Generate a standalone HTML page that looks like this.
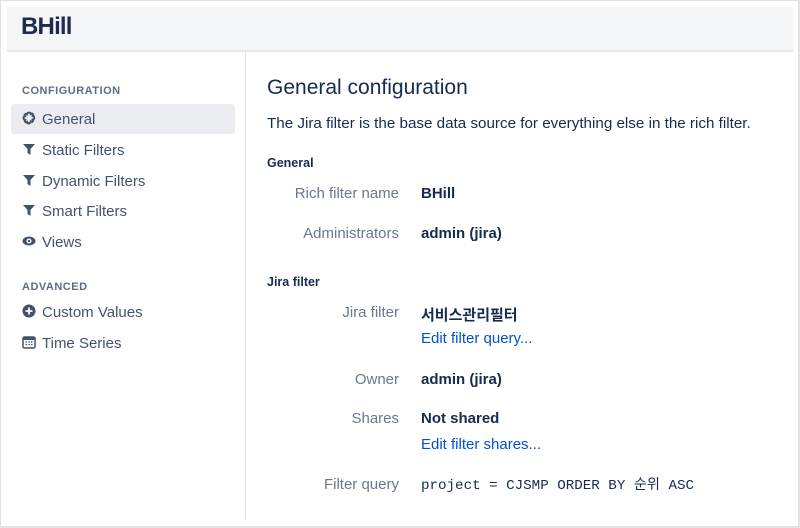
<!DOCTYPE html>
<html><head><meta charset="utf-8"><style>
*{margin:0;padding:0;box-sizing:border-box}
body{width:800px;height:528px;background:#fff;font-family:"Liberation Sans","Noto Sans CJK KR",sans-serif;color:#172b4d;position:relative;overflow:hidden}
.frame{position:absolute;left:0;top:0;width:800px;height:528px;border:1px solid #e2e2e2;border-bottom-width:2px;border-right-width:2px}
.hdr{position:absolute;left:7px;top:7px;width:786px;height:45px;background:#f4f5f7;border-bottom:2px solid #e4e6ea}
.hdr h1{position:absolute;left:14px;top:6px;font-size:24px;font-weight:bold;color:#1d2b4f;letter-spacing:-0.8px}
.div{position:absolute;left:245px;top:52px;width:1px;height:468px;background:#dfe1e6}
.sec{position:absolute;left:22px;font-size:11px;font-weight:bold;color:#5e6c84;letter-spacing:0.5px}
.item{position:absolute;left:11px;width:224px;height:30px;font-size:15px;color:#42526e;line-height:30px;padding-left:31px}
.item span{position:relative;top:1px}
.item.sel{background:#ebecf0;border-radius:3px}
.item svg{position:absolute;left:11px;top:7px}
.t{position:absolute;white-space:nowrap}
.lab{position:absolute;right:401px;font-size:15px;color:#6b778c;white-space:nowrap}
.val{position:absolute;left:421px;font-size:15px;font-weight:bold;color:#172b4d;white-space:nowrap}
.lnk{position:absolute;left:421px;font-size:15px;color:#0052cc;white-space:nowrap}
</style></head><body>
<div class="frame"></div>
<div class="hdr"><h1>BHill</h1></div>
<div class="div"></div>
<div class="sec" style="top:85px">CONFIGURATION</div>
<div class="item sel" style="top:104px"><svg width="14" height="14" viewBox="0 0 14 14"><path d="M7 1.5l1.3.3.5 1.3 1.3-.5 1 1-.5 1.3 1.3.5.3 1.3-.3 1.3-1.3.5.5 1.3-1 1-1.3-.5-.5 1.3L7 12.5l-1.3-.3-.5-1.3-1.3.5-1-1 .5-1.3-1.3-.5L1.5 7l.3-1.3 1.3-.5-.5-1.3 1-1 1.3.5.5-1.3z" fill="none" stroke="#42526e" stroke-width="2"/></svg><span>General</span></div>
<div class="item" style="top:135px"><svg width="14" height="14" viewBox="0 0 14 14"><path d="M1 2h12l-4.5 5v6l-3-2V7z" fill="#42526e"/></svg><span>Static Filters</span></div>
<div class="item" style="top:166px"><svg width="14" height="14" viewBox="0 0 14 14"><path d="M1 2h12l-4.5 5v6l-3-2V7z" fill="#42526e"/></svg><span>Dynamic Filters</span></div>
<div class="item" style="top:196px"><svg width="14" height="14" viewBox="0 0 14 14"><path d="M1 2h12l-4.5 5v6l-3-2V7z" fill="#42526e"/></svg><span>Smart Filters</span></div>
<div class="item" style="top:227px"><svg width="14" height="14" viewBox="0 0 14 14"><ellipse cx="7" cy="7" rx="6.5" ry="4.5" fill="#42526e"/><circle cx="7" cy="7" r="2.5" fill="#fff"/><circle cx="7" cy="7" r="1.2" fill="#42526e"/></svg><span>Views</span></div>
<div class="sec" style="top:281px">ADVANCED</div>
<div class="item" style="top:297px"><svg width="14" height="14" viewBox="0 0 14 14"><circle cx="7" cy="7" r="6.5" fill="#42526e"/><path d="M7 3.5v7M3.5 7h7" stroke="#fff" stroke-width="1.8"/></svg><span>Custom Values</span></div>
<div class="item" style="top:328px"><svg width="14" height="14" viewBox="0 0 14 14"><rect x="1" y="2" width="12" height="11" rx="1.5" fill="none" stroke="#42526e" stroke-width="1.5"/><rect x="1" y="2" width="12" height="3" fill="#42526e"/><path d="M3.5 7h1.5M6.3 7h1.5M9 7h1.5M3.5 9.5h1.5M6.3 9.5h1.5M9 9.5h1.5" stroke="#42526e" stroke-width="1.2"/></svg><span>Time Series</span></div>

<div class="t" style="left:267px;top:76px;font-size:21px;color:#172b4d">General configuration</div>
<div class="t" style="left:267px;top:115px;font-size:15.2px;color:#172b4d">The Jira filter is the base data source for everything else in the rich filter.</div>
<div class="t" style="left:267px;top:156px;font-size:12.5px;font-weight:bold">General</div>
<div class="lab" style="top:185px">Rich filter name</div><div class="val" style="top:185px">BHill</div>
<div class="lab" style="top:225px">Administrators</div><div class="val" style="top:225px">admin (jira)</div>
<div class="t" style="left:267px;top:275px;font-size:12.5px;font-weight:bold">Jira filter</div>
<div class="lab" style="top:304px">Jira filter</div><div class="val" style="top:304px">서비스관리필터</div>
<div class="lnk" style="top:330px">Edit filter query...</div>
<div class="lab" style="top:371px">Owner</div><div class="val" style="top:371px">admin (jira)</div>
<div class="lab" style="top:410px">Shares</div><div class="val" style="top:410px">Not shared</div>
<div class="lnk" style="top:436px">Edit filter shares...</div>
<div class="lab" style="top:476px">Filter query</div><div class="t" style="left:421px;top:474px;font-size:14.2px;font-family:'Liberation Mono','Noto Sans CJK KR',monospace;color:#172b4d">project = CJSMP ORDER BY 순위 ASC</div>
</body></html>
